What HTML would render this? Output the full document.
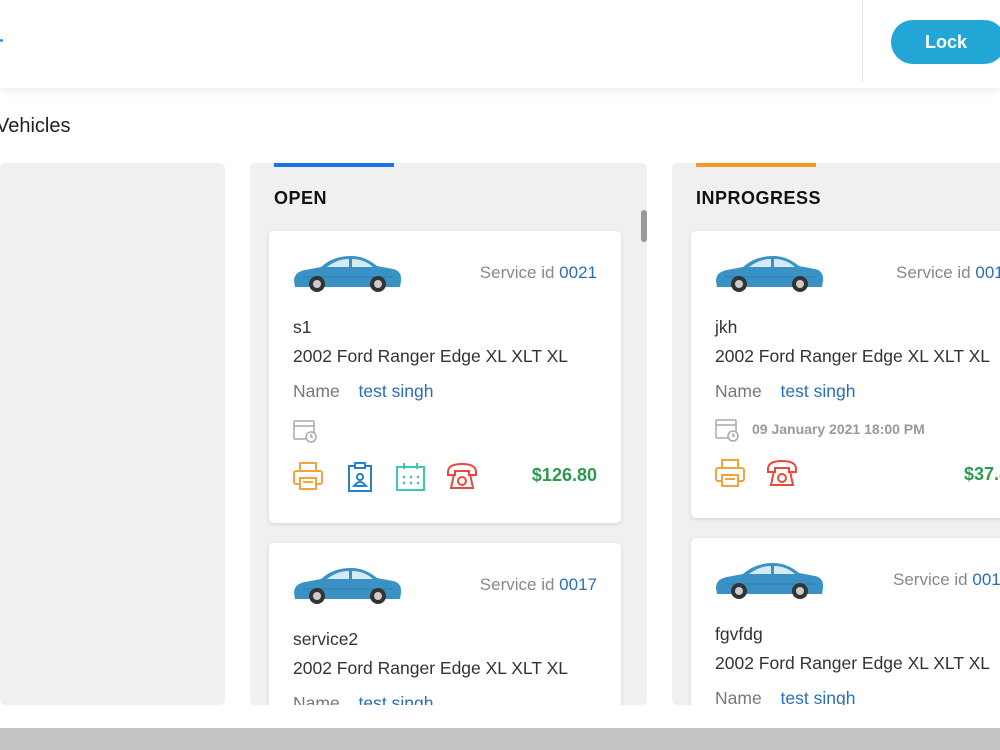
<!DOCTYPE html>
<html><head><meta charset="utf-8"><style>
*{box-sizing:border-box;margin:0;padding:0}
body{width:1000px;height:750px;overflow:hidden;background:#fff;font-family:"Liberation Sans",sans-serif;position:relative}
.hdr{position:absolute;left:0;top:0;width:1000px;height:88px;background:#fff;box-shadow:0 3px 10px rgba(0,0,0,.08);z-index:2}
.sep{position:absolute;left:862px;top:0;width:1px;height:82px;background:#e2e2e2}
.lock{position:absolute;left:891px;top:20px;width:115px;height:44px;border-radius:22px;background:#22a6d6;color:#fff;font-weight:bold;font-size:18px;line-height:44px;padding-left:34px}
.dot{position:absolute;left:0;top:39px;width:3px;height:3px;background:#2a8fd6;border-radius:50%}
.title{position:absolute;left:-4px;top:115px;font-size:20px;color:#222}
.col{position:absolute;top:163px;height:542px;background:#f0f0f0;border-radius:5px;overflow:hidden}
.bar{position:absolute;top:0;height:4px;width:120px}
.h{position:absolute;top:188px;font-weight:bold;font-size:18px;letter-spacing:.5px;color:#111}
.card{position:absolute;background:#fff;border-radius:5px;box-shadow:0 1px 4px rgba(0,0,0,.12);overflow:hidden}
.car{position:absolute;left:24px;top:22px}
.sid{position:absolute;right:24px;top:32px;font-size:17px;color:#888}
.sid b{color:#2a6fb6;font-weight:normal}
.t{position:absolute;left:24px;font-size:17.5px;color:#333}
.nm{color:#777}
.nm b{color:#2a6fb6;font-weight:normal;margin-left:14px}
.price{position:absolute;right:24px;font-size:18px;color:#2e9a4e;font-weight:bold}
.ic{position:absolute}
.bot{position:absolute;left:0;top:728px;width:1000px;height:22px;background:#c4c4c4}
</style></head><body>
<div class="hdr"><div class="dot"></div><div class="sep"></div><div class="lock">Lock</div></div>
<div class="title">Vehicles</div>

<div class="col" style="left:0;width:225px"></div>
<div class="col" style="left:250px;width:397px"><div class="bar" style="left:24px;background:#1a73e8"></div>
<div style="position:absolute;left:391px;top:47px;width:6px;height:32px;background:#9a9a9a;border-radius:3px"></div></div>
<div class="col" style="left:672px;width:340px"><div class="bar" style="left:24px;background:#f39a2b"></div></div>
<div class="h" style="left:274px">OPEN</div>
<div class="h" style="left:696px">INPROGRESS</div>

<svg width="0" height="0" style="position:absolute"><defs>
<g id="car"><path d="M1 28 Q1 19 12 17 L28 14 Q40 3 58 3 Q72 3 84 13 L100 16 Q109 18 108 28 L107 34 L2 34 Z" fill="#3a92c4"/><path d="M34 14 Q44 6 56 6 L56 14 Z M59 6 Q71 6 80 14 L59 14 Z" fill="#d5eaf5"/><path d="M10 24 L100 24" stroke="#2f7fae" stroke-width="1"/><circle cx="24" cy="31" r="8" fill="#333"/><circle cx="24" cy="31" r="4" fill="#ccc"/><circle cx="85" cy="31" r="8" fill="#333"/><circle cx="85" cy="31" r="4" fill="#ccc"/></g>
<g id="cal" fill="none" stroke="#aaa" stroke-width="1.5"><rect x="1" y="2" width="20" height="18" rx="1"/><line x1="1" y1="7" x2="21" y2="7"/><circle cx="18" cy="18" r="5" fill="#fff"/><path d="M18 15v3h2"/></g>
<g id="pr" fill="none" stroke="#f3a33b" stroke-width="2"><rect x="7" y="1" width="16" height="8"/><rect x="1" y="9" width="28" height="13" rx="2"/><rect x="7" y="16" width="16" height="11" fill="#fff"/><line x1="10" y1="20" x2="20" y2="20"/></g>
<g id="ph" fill="none" stroke="#e8483d" stroke-width="2"><path d="M2 10 Q2 2 16 2 Q30 2 30 10 L30 13 L23 13 L23 9 L9 9 L9 13 L2 13 Z"/><path d="M8 12 L5 26 L27 26 L24 12"/><circle cx="16" cy="19" r="4"/></g>
</defs></svg>

<div class="card" style="left:269px;top:231px;width:352px;height:292px">
<svg class="car" width="110" height="42"><use href="#car"/></svg>
<div class="sid">Service id <b>0021</b></div>
<div class="t" style="top:86px">s1</div>
<div class="t" style="top:115px">2002 Ford Ranger Edge XL XLT XL</div>
<div class="t nm" style="top:150px">Name <b>test singh</b></div>
<svg class="ic" style="left:24px;top:188px" width="26" height="26"><use href="#cal"/></svg>
<svg class="ic" style="left:24px;top:231px" width="32" height="30"><use href="#pr"/></svg>
<svg class="ic" style="left:78px;top:231px" width="28" height="30" fill="none" stroke="#2a80c8" stroke-width="2"><rect x="2" y="4" width="22" height="25"/><rect x="8" y="1" width="10" height="5" fill="#fff"/><circle cx="13" cy="15" r="3"/><path d="M7 24 Q13 16 19 24 Z"/></svg>
<svg class="ic" style="left:126px;top:231px" width="32" height="30" fill="none" stroke="#3cc7b5" stroke-width="2"><rect x="2" y="5" width="27" height="23"/><line x1="9" y1="1" x2="9" y2="7"/><line x1="22" y1="1" x2="22" y2="7"/><g stroke-width="2.5" stroke-dasharray="2 5"><line x1="8" y1="15" x2="26" y2="15"/><line x1="8" y1="21" x2="26" y2="21"/></g></svg>
<svg class="ic" style="left:177px;top:231px" width="32" height="30"><use href="#ph"/></svg>
<div class="price" style="top:234px">$126.80</div>
</div>

<div class="card" style="left:269px;top:543px;width:352px;height:200px">
<svg class="car" width="110" height="42"><use href="#car"/></svg>
<div class="sid">Service id <b>0017</b></div>
<div class="t" style="top:86px">service2</div>
<div class="t" style="top:115px">2002 Ford Ranger Edge XL XLT XL</div>
<div class="t nm" style="top:150px">Name <b>test singh</b></div>
</div>

<div class="card" style="left:691px;top:231px;width:352px;height:287px">
<svg class="car" width="110" height="42"><use href="#car"/></svg>
<div style="position:absolute;left:205px;top:32px;font-size:17px;color:#888">Service id <b style="color:#2a6fb6;font-weight:normal">0019</b></div>
<div class="t" style="top:86px">jkh</div>
<div class="t" style="top:115px">2002 Ford Ranger Edge XL XLT XL</div>
<div class="t nm" style="top:150px">Name <b>test singh</b></div>
<svg class="ic" style="left:24px;top:187px" width="26" height="26"><use href="#cal"/></svg>
<div style="position:absolute;left:61px;top:190px;font-size:14px;color:#999;font-weight:bold">09 January 2021 18:00 PM</div>
<svg class="ic" style="left:24px;top:228px" width="32" height="30"><use href="#pr"/></svg>
<svg class="ic" style="left:75px;top:228px" width="32" height="30"><use href="#ph"/></svg>
<div style="position:absolute;left:273px;top:233px;font-size:18px;color:#2e9a4e;font-weight:bold">$37.80</div>
</div>

<div class="card" style="left:691px;top:538px;width:352px;height:200px">
<svg class="car" width="110" height="42"><use href="#car"/></svg>
<div style="position:absolute;left:202px;top:32px;font-size:17px;color:#888">Service id <b style="color:#2a6fb6;font-weight:normal">0018</b></div>
<div class="t" style="top:86px">fgvfdg</div>
<div class="t" style="top:115px">2002 Ford Ranger Edge XL XLT XL</div>
<div class="t nm" style="top:150px">Name <b>test singh</b></div>
</div>

<div style="position:absolute;left:0;top:705px;width:1000px;height:23px;background:#fff"></div>
<div class="bot"></div>
</body></html>
